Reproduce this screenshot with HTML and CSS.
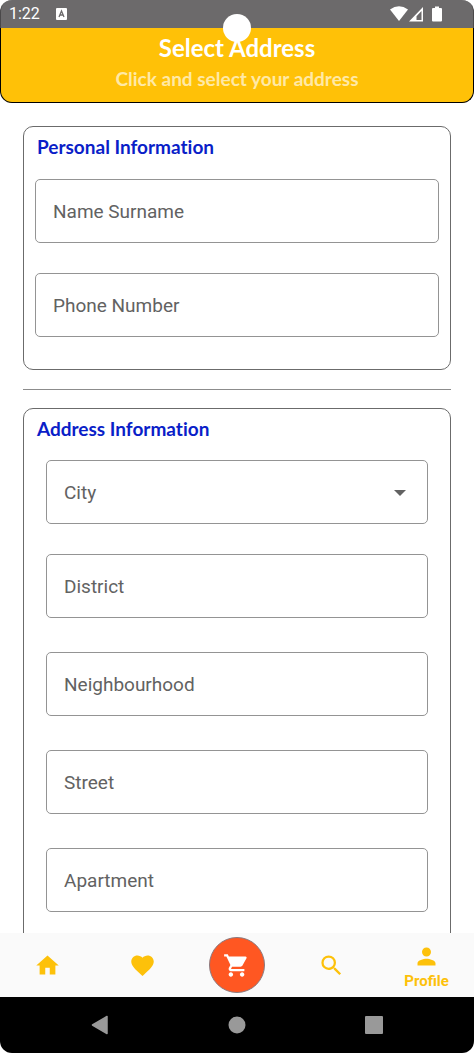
FILE: index.html
```html
<!DOCTYPE html>
<html lang="en">
<head>
<meta charset="utf-8">
<meta name="viewport" content="width=device-width, initial-scale=1">
<title>Select Address</title>
<link rel="stylesheet" href="styles.css">
</head>
<body>
<div class="phone">
  <div class="status">
    <span class="status-left">
      <span class="clock">1:22</span>
      <svg width="11" height="12" viewBox="0 0 11 12" aria-hidden="true"><rect width="11" height="12" rx="1" fill="#fff"/><path d="M3 9 5.500 3 8 9M4 7h3" fill="none" stroke="#6c6a6b" stroke-width="1.300"/></svg>
    </span>
    <svg width="52" height="16" viewBox="0 0 52 16" fill="#fff" aria-hidden="true">
      <path d="M0 3.500Q9-3 18 3.500L9 15Z"/>
      <path fill-rule="evenodd" d="M33 1V15.500H19ZM31.500 5 26.500 10.200V14H31.500Z"/>
      <path fill="#6c6a6b" d="M27.500 10.500h1v3h-1z"/>
      <path d="M43 2h2V.500h4V2h2q1 0 1 1V14.500q0 1-1 1H43q-1 0-1-1V3q0-1 1-1z"/>
    </svg>
    <span class="camera"></span>
  </div>
  <header class="header">
    <h1 class="title">Select Address</h1>
    <p class="subtitle">Click and select your address</p>
  </header>
  <main class="content">
    <section class="card card-personal">
      <h2 class="card-title">Personal Information</h2>
      <input class="field" type="text" placeholder="Name Surname" aria-label="Name Surname">
      <input class="field" type="tel" placeholder="Phone Number" aria-label="Phone Number">
    </section>
    <hr class="divider">
    <section class="card card-address">
      <h2 class="card-title">Address Information</h2>
      <div class="select-wrap">
        <select class="field" aria-label="City"><option>City</option></select>
        <svg class="arrow" width="12" height="6" viewBox="0 0 12 6" aria-hidden="true"><path d="M0 0H12L6 6Z" fill="#626262"/></svg>
      </div>
      <div class="address-lines">
        <input class="field" type="text" placeholder="District" aria-label="District">
        <input class="field" type="text" placeholder="Neighbourhood" aria-label="Neighbourhood">
        <input class="field" type="text" placeholder="Street" aria-label="Street">
        <input class="field" type="text" placeholder="Apartment" aria-label="Apartment">
      </div>
    </section>
  </main>
  <nav class="tabs">
    <button class="tab" aria-label="Home"><svg width="28" height="28" viewBox="0 0 24 24" aria-hidden="true"><path d="M10 20v-6h4v6h5v-8h3L12 3 2 12h3v8z"/></svg></button>
    <button class="tab" aria-label="Favourites"><svg width="28" height="28" viewBox="0 0 24 24" aria-hidden="true"><path d="M12 21.350l-1.450-1.320C5.400 15.360 2 12.280 2 8.500 2 5.420 4.420 3 7.500 3c1.740 0 3.410.810 4.500 2.090C13.090 3.810 14.760 3 16.500 3 19.580 3 22 5.420 22 8.500c0 3.780-3.400 6.860-8.550 11.540z"/></svg></button>
    <button class="tab" aria-label="Cart"><span class="cart"><svg width="28" height="28" viewBox="0 0 24 24" aria-hidden="true"><path d="M7 18c-1.100 0-1.990.900-1.990 2S5.900 22 7 22s2-.900 2-2-.900-2-2-2zM1 2v2h2l3.600 7.590-1.350 2.450c-.160.280-.250.610-.250.960 0 1.100.900 2 2 2h12v-2H7.420c-.140 0-.250-.110-.250-.250l.030-.120.900-1.630h7.450c.750 0 1.410-.410 1.750-1.030l3.580-6.490A1 1 0 0 0 20 4H5.210l-.940-2H1zm16 16c-1.100 0-1.990.900-1.990 2s.890 2 1.990 2 2-.900 2-2-.900-2-2-2z"/></svg></span></button>
    <button class="tab" aria-label="Search"><svg width="28" height="28" viewBox="0 0 24 24" aria-hidden="true"><path d="M15.500 14h-.790l-.280-.270A6.470 6.470 0 0 0 16 9.500 6.500 6.500 0 1 0 9.500 16c1.610 0 3.090-.590 4.230-1.570l.270.280v.790l5 4.990L20.490 19zm-6 0A4.500 4.500 0 1 1 9.500 5a4.500 4.500 0 0 1 0 9z"/></svg></button>
    <button class="tab tab-active"><svg width="28" height="28" viewBox="0 0 24 24" aria-hidden="true"><path d="M12 12c2.210 0 4-1.790 4-4s-1.790-4-4-4-4 1.790-4 4 1.790 4 4 4zm0 2c-2.670 0-8 1.340-8 4v2h16v-2c0-2.660-5.330-4-8-4z"/></svg><span class="tab-label">Profile</span></button>
  </nav>
  <div class="system">
    <button class="key" aria-label="Back"><svg width="18" height="20" viewBox="0 0 18 20" aria-hidden="true"><path d="M16 1.500V18.500L1.500 10Z" stroke="#999" stroke-width="1.500" stroke-linejoin="round"/></svg></button>
    <button class="key" aria-label="Home screen"><svg width="18" height="18" viewBox="0 0 18 18" aria-hidden="true"><circle cx="9" cy="9" r="8.500"/></svg></button>
    <button class="key" aria-label="Recent apps"><svg width="18" height="18" viewBox="0 0 18 18" aria-hidden="true"><rect width="18" height="18" rx="1"/></svg></button>
  </div>
</div>
</body>
</html>
```
FILE: styles.css
```css
* {
  box-sizing: border-box;
}

body {
  margin: 0;
  background: #fff;
  font-family: Roboto, "Liberation Sans", sans-serif;
}

.phone {
  display: flex;
  flex-direction: column;
  height: 100vh;
  overflow: hidden;
}

.status {
  position: relative;
  flex: none;
  display: flex;
  align-items: center;
  justify-content: space-between;
  height: 28px;
  padding: 0 31px 0 8px;
  border: solid #4a4849;
  border-width: 0 1px;
  border-radius: 12px 12px 0 0;
  background: #6c6a6b;
  color: #fff;
}

.status-left {
  display: flex;
  align-items: center;
  gap: 16px;
}

.clock {
  font-size: 16px;
  line-height: 30px;
}

.camera {
  position: absolute;
  top: 14px;
  left: 50%;
  width: 28px;
  height: 28px;
  margin-left: -14px;
  border-radius: 50%;
  background: #fff;
}

.header {
  flex: none;
  height: 75px;
  padding-top: 5px;
  border: 1px solid #000;
  border-radius: 0 0 12px 12px;
  border-top: 0;
  background: #ffc107;
  text-align: center;
  font-family: Lato, sans-serif;
  font-variant-ligatures: none;
}

.title {
  margin: 0;
  color: #fff;
  font-size: 24px;
  font-weight: 700;
  line-height: 30px;
}

.subtitle {
  margin: 0;
  color: #ffe9a6;
  font-size: 19px;
  font-weight: 700;
  line-height: 32px;
}

.content {
  flex: 1;
  min-height: 0;
  overflow: auto;
  scrollbar-width: none;
  padding: 23px 23px 0;
}

.card {
  display: flex;
  flex-direction: column;
  border: 1px solid #6b6b6b;
  border-radius: 10px;
}

.card-personal {
  gap: 30px;
  padding: 0 11px 32px;
}

.card-title {
  margin: 0 -9px 17px;
  color: #0a1ec8;
  font-family: Lato, sans-serif;
  font-size: 19px;
  font-variant-ligatures: none;
  font-weight: 700;
  line-height: 28px;
}

.card-personal .card-title {
  margin: 6px 2px -12px;
}

.card-address {
  padding: 6px 22px 32px;
}

.divider {
  width: 100%;
  height: 1px;
  margin: 19px 0 18px;
  border: 0;
  background: #8c8c8c;
}

.field {
  display: block;
  width: 100%;
  height: 64px;
  padding: 0 17px;
  border: 1px solid #949494;
  border-radius: 5px;
  background: #fff;
  color: #626262;
  font-family: Roboto, sans-serif;
  font-size: 19px;
  appearance: none;
}

.field::placeholder {
  color: #626262;
  opacity: 1;
}

.select-wrap {
  position: relative;
  margin-bottom: 30px;
}

.arrow {
  position: absolute;
  top: 30px;
  right: 22px;
  pointer-events: none;
}

.address-lines {
  display: flex;
  flex-direction: column;
  gap: 34px;
}

.tabs {
  flex: none;
  display: grid;
  grid-template-columns: repeat(5, 1fr);
  height: 64px;
  background: #fafafa;
}

.tab {
  display: flex;
  flex-direction: column;
  align-items: center;
  justify-content: center;
  padding: 0;
  border: 0;
  background: none;
  color: #fdc10a;
  fill: currentColor;
  font-family: Roboto, sans-serif;
}

.tab svg {
  flex: none;
  width: 27px;
  height: 27px;
}

.tab-active {
  padding-top: 4px;
}

.tab-label {
  font-size: 15px;
  font-weight: 700;
  line-height: 22px;
}

.cart {
  display: flex;
  align-items: center;
  justify-content: center;
  width: 56px;
  height: 56px;
  border: 1px solid #8a7a80;
  border-radius: 50%;
  background: #ff5722;
  color: #fff;
  fill: #fff;
}

.system {
  flex: none;
  display: flex;
  align-items: center;
  justify-content: space-around;
  height: 56px;
  padding: 0 32px;
  border-radius: 0 0 12px 12px;
  background: #000;
}

.key {
  display: flex;
  align-items: center;
  justify-content: center;
  width: 32px;
  height: 32px;
  padding: 0;
  border: 0;
  background: none;
  fill: #999;
}
```
